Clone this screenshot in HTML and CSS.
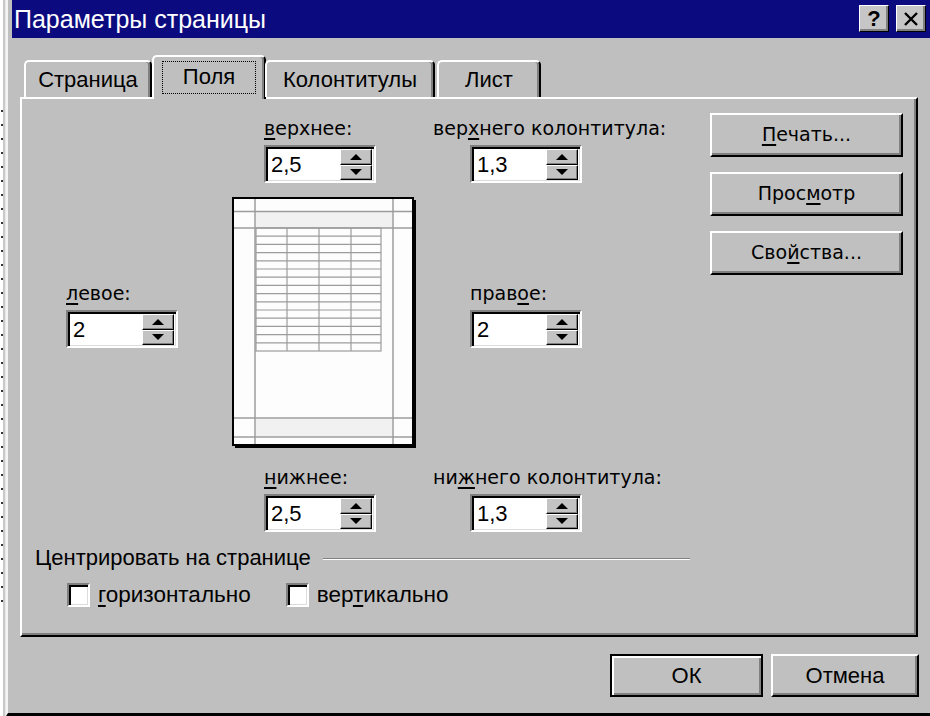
FILE: index.html
```html
<!DOCTYPE html>
<html lang="ru">
<head>
<meta charset="utf-8">
<title>Параметры страницы</title>
<link rel="stylesheet" href="styles.css">
</head>
<body>
<div class="screen">
  <div class="backwin"></div>
  <div class="dialog">
    <div class="titlebar">
      <span class="title">Параметры страницы</span>
      <div class="tbtns">
        <span class="tbtn help">?</span>
        <span class="tbtn close"><svg width="16" height="16" viewBox="0 0 16 16"><path d="M2 2 L14 14 M14 2 L2 14" stroke="#000" stroke-width="2.4"/></svg></span>
      </div>
    </div>
    <div class="body">
      <div class="tabs">
        <div class="tab t1">Страница</div>
        <div class="tab t2 active"><span class="focus">Поля</span></div>
        <div class="tab t3">Колонтитулы</div>
        <div class="tab t4">Лист</div>
      </div>
      <div class="panel">
        <div class="main">
          <div class="margins">
            <div class="field top-mid">
              <div class="lbl"><u>в</u>ерхнее:</div>
              <div class="spin"><span class="val">2,5</span><span class="arrows"><span class="ab up"><i></i></span><span class="ab dn"><i></i></span></span></div>
            </div>
            <div class="field top-right">
              <div class="lbl">вер<u>х</u>него колонтитула:</div>
              <div class="spin ind"><span class="val">1,3</span><span class="arrows"><span class="ab up"><i></i></span><span class="ab dn"><i></i></span></span></div>
            </div>
            <div class="field mid-left">
              <div class="lbl"><u>л</u>евое:</div>
              <div class="spin"><span class="val">2</span><span class="arrows"><span class="ab up"><i></i></span><span class="ab dn"><i></i></span></span></div>
            </div>
            <div class="preview-cell">
              <svg class="preview" width="184" height="251" viewBox="0 0 184 251">
                <rect x="1" y="1" width="180" height="247" fill="#fdfdfd" stroke="#000" stroke-width="2"/>
                <rect x="24" y="15" width="136" height="16" fill="#f1f1f1"/>
                <rect x="24" y="222" width="136" height="18" fill="#f1f1f1"/>
                <rect x="181" y="3" width="3" height="248" fill="#000"/>
                <rect x="3" y="248" width="181" height="3" fill="#000"/>
                <g stroke="#9c9c9c" stroke-width="1.5" fill="none">
                  <line x1="23" y1="2" x2="23" y2="247"/>
                  <line x1="161" y1="2" x2="161" y2="247"/>
                  <line x1="2" y1="14.5" x2="180" y2="14.5"/>
                  <line x1="2" y1="31" x2="180" y2="31"/>
                  <line x1="2" y1="221" x2="180" y2="221"/>
                  <line x1="2" y1="240" x2="180" y2="240"/>
                </g>
                <g stroke="#9c9c9c" stroke-width="1.2" fill="none">
                  <rect x="24" y="31" width="125" height="123"/>
                  <line x1="55" y1="31" x2="55" y2="154"/>
                  <line x1="87" y1="31" x2="87" y2="154"/>
                  <line x1="119" y1="31" x2="119" y2="154"/>
                  <line x1="24" y1="39.2" x2="149" y2="39.2"/>
                  <line x1="24" y1="47.4" x2="149" y2="47.4"/>
                  <line x1="24" y1="55.6" x2="149" y2="55.6"/>
                  <line x1="24" y1="63.8" x2="149" y2="63.8"/>
                  <line x1="24" y1="72" x2="149" y2="72"/>
                  <line x1="24" y1="80.2" x2="149" y2="80.2"/>
                  <line x1="24" y1="88.4" x2="149" y2="88.4"/>
                  <line x1="24" y1="96.6" x2="149" y2="96.6"/>
                  <line x1="24" y1="104.8" x2="149" y2="104.8"/>
                  <line x1="24" y1="113" x2="149" y2="113"/>
                  <line x1="24" y1="121.2" x2="149" y2="121.2"/>
                  <line x1="24" y1="129.4" x2="149" y2="129.4"/>
                  <line x1="24" y1="137.6" x2="149" y2="137.6"/>
                  <line x1="24" y1="145.8" x2="149" y2="145.8"/>
                </g>
              </svg>
            </div>
            <div class="field mid-right">
              <div class="lbl">прав<u>о</u>е:</div>
              <div class="spin"><span class="val">2</span><span class="arrows"><span class="ab up"><i></i></span><span class="ab dn"><i></i></span></span></div>
            </div>
            <div class="field bot-mid">
              <div class="lbl"><u>н</u>ижнее:</div>
              <div class="spin"><span class="val">2,5</span><span class="arrows"><span class="ab up"><i></i></span><span class="ab dn"><i></i></span></span></div>
            </div>
            <div class="field bot-right">
              <div class="lbl">ни<u>ж</u>него колонтитула:</div>
              <div class="spin ind"><span class="val">1,3</span><span class="arrows"><span class="ab up"><i></i></span><span class="ab dn"><i></i></span></span></div>
            </div>
          </div>
          <div class="side">
            <div class="btn wide"><u>П</u>ечать...</div>
            <div class="btn wide">Прос<u>м</u>отр</div>
            <div class="btn wide">Сво<u>й</u>ства...</div>
          </div>
        </div>
        <div class="group">
          <div class="group-head"><span class="group-title">Центрировать на странице</span><span class="etch"></span></div>
          <div class="checks">
            <label class="chk"><span class="box"></span><span class="ctext"><u>г</u>оризонтально</span></label>
            <label class="chk"><span class="box"></span><span class="ctext">вер<u>т</u>икально</span></label>
          </div>
        </div>
      </div>
      <div class="footer">
        <div class="btn narrow default"><span class="btn-in">ОК</span></div>
        <div class="btn narrow cancel">Отмена</div>
      </div>
    </div>
  </div>
</div>
</body>
</html>
```
FILE: styles.css
```css
* { box-sizing: border-box; }
html, body { margin: 0; padding: 0; }
body { background: #bfbfbf; }

.screen {
  display: flex;
  width: 930px;
  height: 716px;
  overflow: hidden;
}

.backwin {
  width: 6px;
  flex: none;
  background:
    repeating-linear-gradient(to bottom, #333 0 2px, transparent 2px 14px) 1px 110px / 2px 500px no-repeat,
    linear-gradient(to right, #fff 0 3px, #c8c8c8 3px 5px, #e8e8e8 5px);
}

.dialog {
  flex: 1;
  display: flex;
  flex-direction: column;
  background: #bfbfbf;
  border-left: 2px solid #f4f4f4;
  padding-left: 4px;
  border-bottom: 3px solid #000;
  height: 716px;
}

.titlebar {
  height: 38px;
  flex: none;
  background: #0b0b7f;
  display: flex;
  align-items: center;
  justify-content: space-between;
  padding: 0 4px 0 2px;
}
.title {
  color: #fff;
  font-family: "Liberation Sans", sans-serif;
  font-size: 25px;
  line-height: 38px;
}
.tbtns { display: flex; gap: 7px; align-self: flex-start; margin-top: 5px; }
.tbtn {
  width: 30px;
  height: 27px;
  background: #c6c6c6;
  border: 1px solid;
  border-color: #fff #000 #000 #fff;
  box-shadow: inset -2px -2px #808080;
  display: flex;
  align-items: center;
  justify-content: center;
  font-family: "Liberation Sans", sans-serif;
  font-weight: bold;
  font-size: 22px;
  color: #000;
}

.body {
  flex: 1;
  display: flex;
  flex-direction: column;
  padding: 17px 12px 0 8px;
}

/* Tabs */
.tabs {
  display: flex;
  align-items: flex-end;
  height: 42px;
  padding-left: 4px;
  position: relative;
  z-index: 2;
}
.tab {
  height: 37px;
  border: 2px solid #fff;
  border-right-color: #000;
  border-bottom: none;
  border-radius: 5px 5px 0 0;
  box-shadow: inset -2px 0 #808080;
  display: flex;
  align-items: center;
  justify-content: center;
  font-family: "Liberation Sans", sans-serif;
  font-size: 22px;
  color: #000;
  background: #bfbfbf;
}
.t1 { width: 128px; }
.t2 { width: 114px; }
.t3 { width: 170px; margin-left: -1px; }
.t4 { width: 104px; margin-left: 2px; }
.tab.active {
  height: 44px;
  margin-bottom: -2px;
  padding-bottom: 2px;
}
.focus {
  border: 1px dotted #000;
  padding: 2px 20px 3px;
  line-height: 26px;
}

/* Panel */
.panel {
  height: 540px;
  border: 2px solid;
  border-color: #fff #000 #000 #fff;
  box-shadow: inset -2px -2px #808080;
  padding: 14px 13px 0 13px;
  display: flex;
  flex-direction: column;
}
.main {
  display: flex;
  justify-content: space-between;
}

.margins {
  margin-left: 31px;
  width: 644px;
  display: grid;
  grid-template-columns: 166px 201px 277px;
  grid-template-rows: auto auto auto;
}

.field { display: flex; flex-direction: column; }
.lbl {
  font-family: "DejaVu Sans", sans-serif;
  font-size: 19px;
  line-height: 22px;
  color: #000;
  margin-bottom: 6px;
  white-space: nowrap;
}
.lbl u, .btn u, .ctext u { text-decoration-thickness: 2px; text-underline-offset: 3px; }

.top-mid { grid-column: 2; grid-row: 1; margin: 4px 0 0 32px; }
.top-right { grid-column: 3; grid-row: 1; margin-top: 4px; }
.mid-left { grid-column: 1; grid-row: 2; margin-top: 99px; }
.preview-cell { grid-column: 2; grid-row: 2; margin-top: 14px; }
.mid-right { grid-column: 3; grid-row: 2; margin: 99px 0 0 37px; }
.bot-mid { grid-column: 2; grid-row: 3; margin: 18px 0 0 32px; }
.bot-right { grid-column: 3; grid-row: 3; margin-top: 18px; }
.spin.ind { margin-left: 37px; }

.preview { display: block; }

/* Spinner */
.spin {
  width: 112px;
  height: 38px;
  background: #fff;
  border: 2px solid;
  border-color: #808080 #fff #fff #808080;
  box-shadow: inset 2px 2px #000, inset -1px -1px #dcdcdc;
  display: flex;
  align-items: center;
  justify-content: space-between;
  padding: 2px 2px 1px 5px;
}
.val {
  font-family: "Liberation Sans", sans-serif;
  font-size: 22px;
  color: #000;
  padding-top: 1px;
}
.arrows {
  width: 32px;
  height: 100%;
  display: flex;
  flex-direction: column;
}
.ab {
  flex: 1;
  background: #c3c3c3;
  border: 1px solid;
  border-color: #fff #000 #000 #fff;
  box-shadow: inset -1px -1px #808080;
  display: flex;
  align-items: center;
  justify-content: center;
}
.up i {
  width: 0; height: 0;
  border-left: 6px solid transparent;
  border-right: 6px solid transparent;
  border-bottom: 6px solid #000;
}
.dn i {
  width: 0; height: 0;
  border-left: 6px solid transparent;
  border-right: 6px solid transparent;
  border-top: 6px solid #000;
}

/* Buttons */
.side {
  width: 193px;
  display: flex;
  flex-direction: column;
  gap: 15px;
}
.btn {
  background: #c0c0c0;
  border: 2px solid;
  border-color: #fff #000 #000 #fff;
  box-shadow: inset -2px -2px #808080;
  display: flex;
  align-items: center;
  justify-content: center;
  color: #000;
}
.btn.wide {
  height: 44px;
  font-family: "DejaVu Sans", sans-serif;
  font-size: 19px;
  padding-bottom: 2px;
}

/* Group */
.group { margin-top: 13px; }
.group-head {
  display: flex;
  align-items: center;
  width: 655px;
  gap: 12px;
}
.group-title {
  font-family: "Liberation Sans", sans-serif;
  font-size: 22px;
  line-height: 26px;
  color: #000;
}
.ctext {
  font-family: "Liberation Sans", sans-serif;
  font-size: 22.5px;
  line-height: 26px;
  color: #000;
}
.etch {
  flex: 1;
  height: 2px;
  border-top: 1px solid #808080;
  border-bottom: 1px solid #fff;
  margin-top: 2px;
}
.checks {
  display: flex;
  align-items: center;
  margin: 11px 0 0 32px;
}
.chk { display: flex; align-items: center; gap: 8px; }
.chk + .chk { margin-left: 35px; }
.box {
  width: 23px;
  height: 24px;
  background: #fff;
  border: 2px solid;
  border-color: #808080 #fff #fff #808080;
  box-shadow: inset 2px 2px #000, inset -1px -1px #dcdcdc;
}

/* Footer */
.footer {
  display: flex;
  justify-content: flex-end;
  gap: 8px;
  margin-top: 17px;
  margin-right: -1px;
}
.btn.narrow {
  height: 43px;
  font-family: "Liberation Sans", sans-serif;
  font-size: 22px;
}
.btn.default {
  width: 153px;
  border: 2px solid #000;
  box-shadow: inset 2px 2px #fff, inset -2px -2px #808080;
}
.btn.cancel { width: 148px; }
```
